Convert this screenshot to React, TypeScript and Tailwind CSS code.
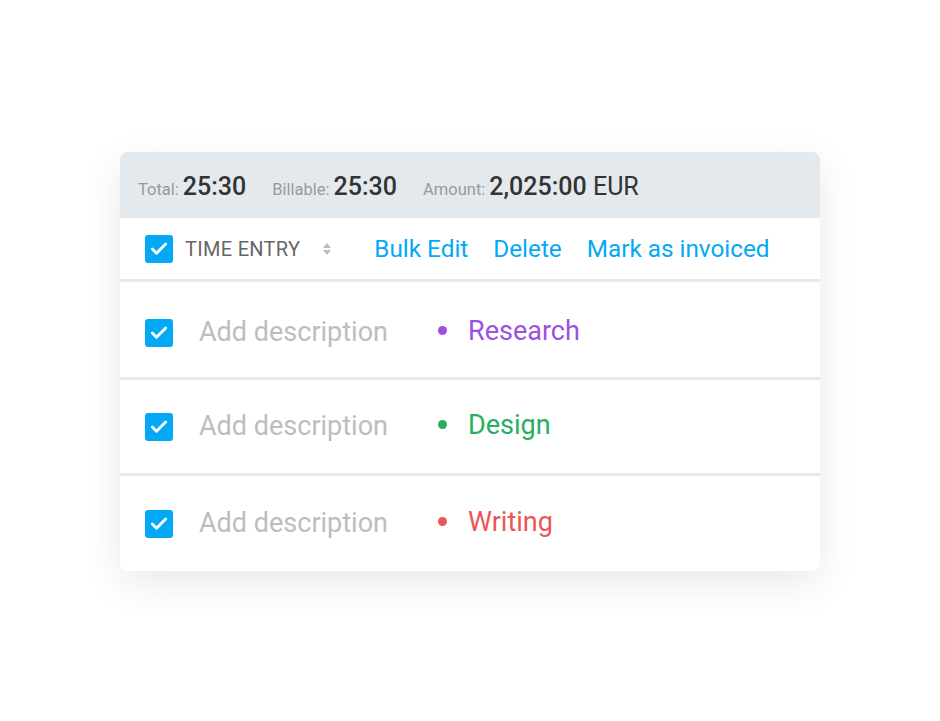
import { Check } from "lucide-react";

const font = { fontFamily: "Roboto, 'Noto Sans', sans-serif" };

function Box() {
  return (
    <div className="flex size-[28px] shrink-0 items-center justify-center rounded-[3px] bg-[#03a9f4] text-white">
      <Check size={20} strokeWidth={3.5} />
    </div>
  );
}

const rows = [
  { tag: "Research", dot: "bg-[#9b51e0]", text: "text-[#9b51e0]", h: "h-[98px] pt-[6px]" },
  { tag: "Design", dot: "bg-[#27ae60]", text: "text-[#27ae60]", h: "h-[96px]" },
  { tag: "Writing", dot: "bg-[#eb5757]", text: "text-[#eb5757]", h: "h-[98px]" },
];

export default function App() {
  return (
    <div className="min-h-[721px] w-full bg-white pt-[152px]" style={font}>
      <div className="mx-auto w-[700px] overflow-hidden rounded-lg bg-white shadow-[0_12px_40px_rgba(0,0,0,0.09)]">
        <div className="flex h-[66px] items-center gap-[26px] bg-[#e4e9ee] pl-[18px] pt-[4px]">
          <div className="flex items-baseline gap-[4px]">
            <span className="text-[16.5px] text-[#999]">Total:</span>
            <span className="text-[25px] font-medium text-[#333]">25:30</span>
          </div>
          <div className="flex items-baseline gap-[4px]">
            <span className="text-[16.5px] text-[#999]">Billable:</span>
            <span className="text-[25px] font-medium text-[#333]">25:30</span>
          </div>
          <div className="flex items-baseline gap-[4px]">
            <span className="text-[16.5px] text-[#999]">Amount:</span>
            <span className="text-[25px] font-medium text-[#333]">
              2,025:00 <span className="font-normal">EUR</span>
            </span>
          </div>
        </div>

        <div className="flex h-[61px] items-center pl-[25px] pt-[1px]">
          <Box />
          <span className="ml-[12px] text-[20px] tracking-[0.3px] text-[#666]">TIME ENTRY</span>
          <svg className="ml-[21px]" width="12" height="16" viewBox="0 0 12 16">
            <path d="M6 2 L10 7 H2 Z" fill="#bbb" />
            <path d="M6 14 L10 9 H2 Z" fill="#bbb" />
          </svg>
          <div className="ml-[41px] flex gap-[25px] text-[24.3px] text-[#03a9f4]">
            <span>Bulk Edit</span>
            <span>Delete</span>
            <span>Mark as invoiced</span>
          </div>
        </div>

        {rows.map((r) => (
          <div key={r.tag} className={`flex ${r.h} items-center border-t-[3px] border-[#e4eaee] pl-[25px]`}>
            <Box />
            <span className="ml-[26px] w-[239px] text-[27px] text-[#bdbdbd]">Add description</span>
            <span className={`-mt-[5px] size-[9px] rounded-full ${r.dot}`} />
            <span className={`ml-[21px] -mt-[3px] text-[27px] ${r.text}`}>{r.tag}</span>
          </div>
        ))}
      </div>
    </div>
  );
}
